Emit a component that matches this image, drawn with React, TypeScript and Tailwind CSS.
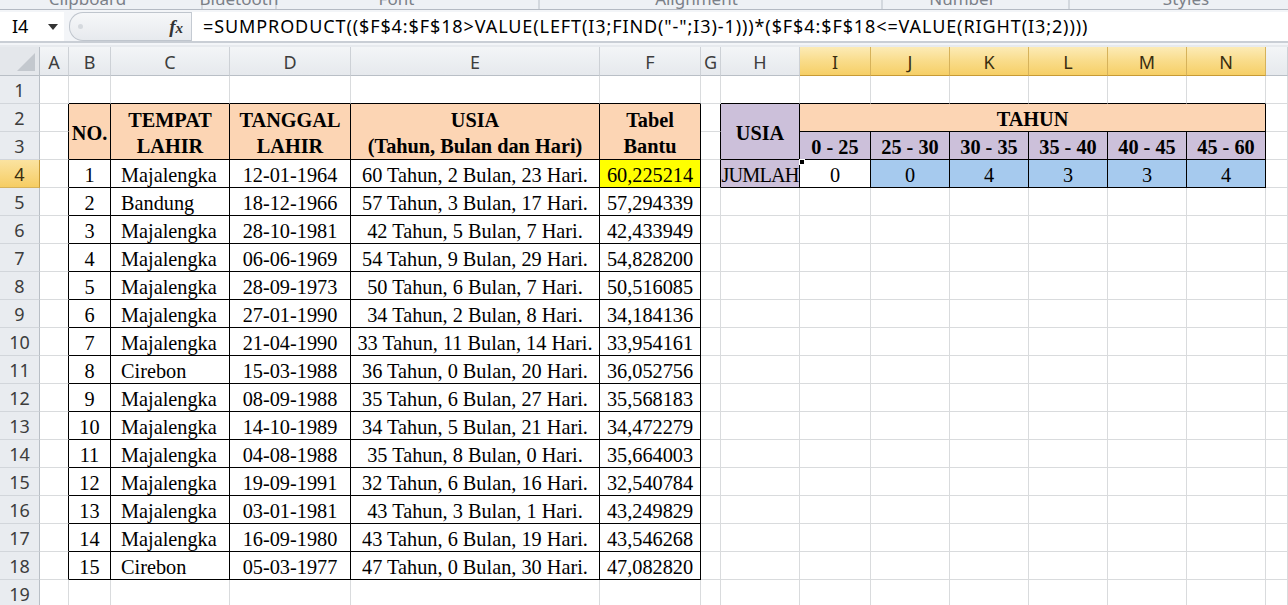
import React from 'react';

type Info = {
  text?: string;
  lines?: string[];
  bg?: string;
  bold?: boolean;
  align?: 'left' | 'center';
  tight?: boolean;
  cs?: number;
  rs?: number;
  skip?: boolean;
};

const data: [string, string, string, string, string][] = [
  ['1', 'Majalengka', '12-01-1964', '60 Tahun, 2 Bulan, 23 Hari.', '60,225214'],
  ['2', 'Bandung', '18-12-1966', '57 Tahun, 3 Bulan, 17 Hari.', '57,294339'],
  ['3', 'Majalengka', '28-10-1981', '42 Tahun, 5 Bulan, 7 Hari.', '42,433949'],
  ['4', 'Majalengka', '06-06-1969', '54 Tahun, 9 Bulan, 29 Hari.', '54,828200'],
  ['5', 'Majalengka', '28-09-1973', '50 Tahun, 6 Bulan, 7 Hari.', '50,516085'],
  ['6', 'Majalengka', '27-01-1990', '34 Tahun, 2 Bulan, 8 Hari.', '34,184136'],
  ['7', 'Majalengka', '21-04-1990', '33 Tahun, 11 Bulan, 14 Hari.', '33,954161'],
  ['8', 'Cirebon', '15-03-1988', '36 Tahun, 0 Bulan, 20 Hari.', '36,052756'],
  ['9', 'Majalengka', '08-09-1988', '35 Tahun, 6 Bulan, 27 Hari.', '35,568183'],
  ['10', 'Majalengka', '14-10-1989', '34 Tahun, 5 Bulan, 21 Hari.', '34,472279'],
  ['11', 'Majalengka', '04-08-1988', '35 Tahun, 8 Bulan, 0 Hari.', '35,664003'],
  ['12', 'Majalengka', '19-09-1991', '32 Tahun, 6 Bulan, 16 Hari.', '32,540784'],
  ['13', 'Majalengka', '03-01-1981', '43 Tahun, 3 Bulan, 1 Hari.', '43,249829'],
  ['14', 'Majalengka', '16-09-1980', '43 Tahun, 6 Bulan, 19 Hari.', '43,546268'],
  ['15', 'Cirebon', '05-03-1977', '47 Tahun, 0 Bulan, 30 Hari.', '47,082820'],
];

const LETTERS = ['A', 'B', 'C', 'D', 'E', 'F', 'G', 'H', 'I', 'J', 'K', 'L', 'M', 'N', ''];
const ranges = ['0 - 25', '25 - 30', '30 - 35', '35 - 40', '40 - 45', '45 - 60'];
const jumlah = ['0', '0', '4', '3', '3', '4'];

const PEACH = 'bg-[#fcd5b4]';
const PURPLE = 'bg-[#ccc0da]';
const BLUE = 'bg-[#a6caee]';
const YELLOW = 'bg-[#ffff00]';

function inT(c: number, r: number) {
  const t1 = c >= 1 && c <= 5 && r >= 2 && r <= 18;
  const t2 = c >= 7 && c <= 13 && r >= 2 && r <= 4;
  return t1 || t2;
}

function getCell(c: number, r: number): Info {
  if (r === 2 && c >= 1 && c <= 5) {
    const heads: string[][] = [
      ['NO.'],
      ['TEMPAT', 'LAHIR'],
      ['TANGGAL', 'LAHIR'],
      ['USIA', '(Tahun, Bulan dan Hari)'],
      ['Tabel', 'Bantu'],
    ];
    return { lines: heads[c - 1], bg: PEACH, bold: true, rs: 2 };
  }
  if (r === 3 && c >= 1 && c <= 5) return { skip: true };
  if (r === 2 && c === 7) return { lines: ['USIA'], bg: PURPLE, bold: true, rs: 2 };
  if (r === 3 && c === 7) return { skip: true };
  if (r === 2 && c === 8) return { text: 'TAHUN', bg: PEACH, bold: true, cs: 6 };
  if (r === 2 && c >= 9 && c <= 13) return { skip: true };
  if (r === 3 && c >= 8 && c <= 13) return { text: ranges[c - 8], bg: PURPLE, bold: true };
  if (r === 4 && c === 7) return { text: 'JUMLAH', bg: PURPLE, tight: true };
  if (r === 4 && c === 8) return { text: jumlah[0] };
  if (r === 4 && c >= 9 && c <= 13) return { text: jumlah[c - 8], bg: BLUE };
  if (r >= 4 && r <= 18 && c >= 1 && c <= 5) {
    const row = data[r - 4];
    const v = row[c - 1];
    if (c === 2) return { text: v, align: 'left' };
    if (c === 5 && r === 4) return { text: v, bg: YELLOW };
    return { text: v };
  }
  return {};
}

function Cell({ c, r }: { c: number; r: number }) {
  const info = getCell(c, r);
  if (info.skip) return null;
  const cs = info.cs ?? 1;
  const rs = info.rs ?? 1;
  const lastC = c + cs - 1;
  const lastR = r + rs - 1;
  const rBlack = inT(lastC, r) || inT(lastC + 1, r);
  const bBlack = inT(c, lastR) || inT(c, lastR + 1);
  const cls = [
    'relative flex items-center overflow-visible whitespace-nowrap border-r border-b pt-[2px] text-black',
    rBlack ? 'border-r-black' : 'border-r-[#d9dbdd]',
    bBlack ? 'border-b-black' : 'border-b-[#d9dbdd]',
    info.bg ?? 'bg-white',
    info.bold ? 'font-bold' : 'font-normal',
    info.align === 'left' ? 'justify-start pl-[10px]' : 'justify-center',
    info.tight ? 'tracking-[-0.9px]' : '',
    rs === 2 ? 'row-span-2' : '',
    cs === 6 ? 'col-span-6' : '',
  ].join(' ');
  return (
    <div className={cls}>
      {info.lines ? (
        <div className="flex flex-col items-center leading-[26px]">
          {info.lines.map((l) => (
            <span key={l}>{l}</span>
          ))}
        </div>
      ) : (
        <span className="leading-[26px]">{info.text ?? ''}</span>
      )}
    </div>
  );
}

function ColHeader({ i }: { i: number }) {
  const sel = i >= 8 && i <= 13;
  return (
    <div
      className={
        'flex items-center justify-center border-r border-b pt-[2px] ' +
        (sel
          ? 'bg-gradient-to-b from-[#fcebb6] via-[#f9dc8a] to-[#f6cf66] border-r-[#d6b25a] border-b-[#c79a35] text-[#3a2e10]'
          : 'bg-gradient-to-b from-[#f3f5f7] to-[#e6e9ed] border-r-[#cdd1d6] border-b-[#b9bfc6] text-[#3d3d3d]')
      }
    >
      {LETTERS[i]}
    </div>
  );
}

function RowHeader({ r }: { r: number }) {
  const sel = r === 4;
  return (
    <div
      className={
        'flex items-center justify-center border-r border-b pt-[2px] ' +
        (sel
          ? 'bg-gradient-to-b from-[#fbe3a0] to-[#f6cd62] border-r-[#c79a35] border-b-[#d6b25a] text-[#3a2e10]'
          : 'bg-[#e9ecf0] border-r-[#b9bfc6] border-b-[#d2d6db] text-[#3d3d3d]')
      }
    >
      {r}
    </div>
  );
}

function Ribbon() {
  const groups: [string, string][] = [
    ['Clipboard', 'w-[203px] pr-[26px]'],
    ['Bluetooth', 'w-[74px]'],
    ['Font', 'w-[263px] pr-[22px]'],
    ['Alignment', 'w-[343px] pr-[28px]'],
    ['Number', 'w-[187px] pr-[26px]'],
    ['Styles', 'flex-1 pl-[14px]'],
  ];
  return (
    <div className="flex h-[10px] overflow-hidden border-b border-b-[#b4bac3] bg-[#eef1f5]">
      {groups.map(([g, w], i) => (
        <div
          key={g}
          className={
            'flex h-full justify-center ' + w + (i < 5 ? ' border-r-2 border-r-[#d3d8de]' : '')
          }
        >
          <span className="mt-[-10px] text-[17px] leading-[17px] text-[#7b8088]">{g}</span>
        </div>
      ))}
    </div>
  );
}

function FormulaBar() {
  return (
    <div className="flex h-[35px] flex-col bg-[#f3f5f8]">
      <div className="flex h-[31px] items-stretch pt-[2px]">
        <div className="flex w-[64px] items-center justify-between bg-white pl-[12px] pr-[6px] text-[18px] text-black">
          <span>I4</span>
          <svg width="10" height="6" viewBox="0 0 10 6">
            <path d="M0 0 L10 0 L5 6 Z" fill="#333" />
          </svg>
        </div>
        <div className="ml-[5px] flex w-[122px] items-center justify-between rounded-l-[14px] border border-r-0 border-[#bfc5cd] bg-gradient-to-b from-[#f6f7f9] to-[#e7eaee] pl-[8px] pr-[8px]">
          <div className="h-[5px] w-[5px] rounded-full bg-[#d5d9de]" />
          <span className="font-['Liberation_Serif',serif] text-[19px] font-bold italic leading-none text-[#333]">
            f<span className="text-[15px]">x</span>
          </span>
        </div>
        <div className="flex flex-1 items-center border-l border-l-[#c4cad2] bg-white pl-[11px] text-[18px] tracking-[0.9px] text-black">
          {'=SUMPRODUCT(($F$4:$F$18>VALUE(LEFT(I3;FIND("-";I3)-1)))*($F$4:$F$18<=VALUE(RIGHT(I3;2))))'}
        </div>
      </div>
      <div className="h-[2px] bg-[#c9ced5]" />
    </div>
  );
}

export default function App() {
  const rows = Array.from({ length: 19 }, (_, i) => i + 1);
  const cols = Array.from({ length: 15 }, (_, i) => i);
  return (
    <div className="h-[605px] w-[1288px] overflow-hidden bg-[#f3f5f8] font-['Noto_Sans',sans-serif]">
      <Ribbon />
      <FormulaBar />
      <div className="h-[2px] bg-[#e7eaee]" />
      <div className="relative grid grid-cols-[40px_29px_42px_119px_121px_249px_101px_20px_79px_71px_79px_79px_79px_79px_79px_22px] grid-rows-[29px_repeat(19,28px)] text-[18px]">
        <div className="relative border-r border-b border-r-[#b9bfc6] border-b-[#b9bfc6] bg-[#e4e7eb]">
          <div className="absolute bottom-[4px] right-[4px] h-0 w-0 border-b-[18px] border-l-[18px] border-b-[#c3c8ce] border-l-transparent" />
        </div>
        {cols.map((i) => (
          <ColHeader key={i} i={i} />
        ))}
        {rows.map((r) => (
          <React.Fragment key={r}>
            <RowHeader r={r} />
            <div className="contents font-['Liberation_Serif',serif] text-[20.3px]">
              {cols.map((c) => (
                <Cell key={c} c={c} r={r} />
              ))}
            </div>
          </React.Fragment>
        ))}
        <div className="pointer-events-none absolute col-start-10 col-end-16 row-start-5 row-end-6 -ml-[1px] -mt-[1px] border-2 border-black shadow-[inset_0_0_0_1px_#ffffff]">
          <div className="absolute -bottom-[4px] -right-[4px] h-[6px] w-[6px] border border-white bg-black" />
        </div>
      </div>
    </div>
  );
}
